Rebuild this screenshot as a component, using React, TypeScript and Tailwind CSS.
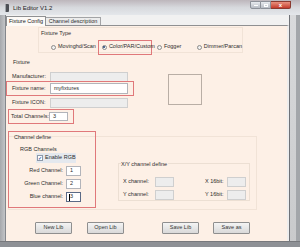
import React from "react";

function Radio({ checked }: { checked?: boolean }) {
  return (
    <span className="w-[5px] h-[5px] rounded-full border border-[#8c8c8c] bg-gradient-to-br from-[#e2e2e2] to-white flex items-center justify-center shrink-0">
      {checked && <span className="w-[2px] h-[2px] rounded-full bg-[#1e3f73]" />}
    </span>
  );
}

function Field({ w, grey, value, h = "h-[10px]" }: { w: string; grey?: boolean; value?: string; h?: string }) {
  return (
    <div
      className={`${w} ${h} border flex items-center pl-[3px] ${
        grey ? "bg-[#ededed] border-[#cfcfcf]" : "bg-white border-[#b2b4ba]"
      }`}
    >
      {value}
    </div>
  );
}

function Button({ label }: { label: string }) {
  return (
    <div className="w-[37px] h-[12px] border border-[#8f8f8f] rounded-[1px] bg-gradient-to-b from-[#f4f4f4] to-[#d9d9d9] flex items-center justify-center text-[#333]">
      {label}
    </div>
  );
}

export default function App() {
  return (
    <div className="w-[300px] h-[247px] overflow-hidden flex flex-col bg-[#9c9fa4] font-['Liberation_Sans',sans-serif] text-[5.5px] leading-none text-[#2d2d2d]">
      {/* title bar */}
      <div className="h-[15px] shrink-0 flex items-start bg-gradient-to-b from-[#bdb6bb] via-[#d7d9dd] to-[#e4e7eb]">
        <div className="mt-[4px] ml-[5px] w-[4px] h-[8px] rounded-[1px] bg-[#4d4f55] border-l border-[#a0a3a8]" />
        <span className="mt-[5px] ml-[4px] text-[6px] text-[#222]">Lib Editor V1.2</span>
        <div className="ml-auto mr-[9px] mt-[1px] flex">
          <div className="w-[11px] h-[8px] border border-[#8d9199] bg-gradient-to-b from-[#e8ebef] to-[#b7bcc4] rounded-bl-[2px] flex items-end justify-center pb-[2px]">
            <span className="w-[4px] h-[1px] bg-white" />
          </div>
          <div className="w-[10px] h-[8px] border-y border-r border-[#8d9199] bg-gradient-to-b from-[#e8ebef] to-[#b7bcc4] flex items-center justify-center">
            <span className="w-[4px] h-[3px] border border-white" />
          </div>
          <div className="w-[20px] h-[8px] border-y border-r border-[#8a3a30] bg-gradient-to-b from-[#e8917f] to-[#c4392b] rounded-br-[2px] flex items-center justify-center text-white text-[6px] font-bold">
            x
          </div>
        </div>
      </div>

      <div className="flex flex-1 min-h-0">
        {/* left frame */}
        <div className="w-[6px] shrink-0 bg-gradient-to-r from-[#a6a8ac] to-[#c2c4c7] border-r border-[#84878c]" />

        <div className="w-[283px] flex flex-col min-h-0">
          {/* tabs */}
          <div className="h-[10px] shrink-0 flex items-end bg-[#f1f1f1]">
            <div className="w-[40px] h-[10px] -mb-px relative z-10 bg-[#fdfaf7] border-x border-t border-[#8f9092] flex items-center justify-center text-[#222]">
              Fixture Config
            </div>
            <div className="w-[55px] h-[8px] bg-[#ececec] border-r border-t border-[#a3a4a6] flex items-center justify-center">
              Channel description
            </div>
          </div>

          {/* content */}
          <div className="flex-1 min-h-0 bg-[#fdf0e6] border-t border-r-2 border-[#8f9092] border-r-[#eeeeee] flex flex-col">
            {/* fixture type */}
            <div className="ml-[32px] mt-[1px] w-[205px] h-[26px] border border-[#f1e3d7] flex flex-col">
              <span className="ml-[2px] mt-[3px]">Fixture Type</span>
              <div className="mt-[3px] flex items-center h-[15px]">
                <div className="ml-[12px] w-[47px] flex items-center gap-[2px]">
                  <Radio />
                  <span>Movinghd/Scan</span>
                </div>
                <div className="w-[54px] h-[15px] border border-[#e0787a] flex items-center gap-[2px] pl-[3px]">
                  <Radio checked />
                  <span>Color/PAR/Custom</span>
                </div>
                <div className="ml-[5px] w-[40px] flex items-center gap-[2px]">
                  <Radio />
                  <span>Fogger</span>
                </div>
                <div className="flex items-center gap-[2px]">
                  <Radio />
                  <span>Dimmer/Parcan</span>
                </div>
              </div>
            </div>

            {/* fixture */}
            <div className="flex">
              <div className="w-[128px] flex flex-col">
                <span className="ml-[7px] mt-[7px] h-[6px]">Fixture</span>
                <div className="mt-[6px] ml-[6px] flex items-center">
                  <span className="w-[38px]">Manufacturer:</span>
                  <Field w="w-[78px]" grey />
                </div>
                <div className="-mt-px h-[15px] border border-[#e0787a] flex items-center pl-[5px]">
                  <span className="w-[38px]">Fixture name:</span>
                  <Field w="w-[78px]" h="h-[11px]" value="myfixtures" />
                </div>
                <div className="mt-[2px] ml-[6px] flex items-center">
                  <span className="w-[38px]">Fixture ICON:</span>
                  <Field w="w-[78px]" grey />
                </div>
                <div className="mt-px ml-[2px] w-[66px] h-[15px] border border-[#e0787a] flex items-center pl-[2px]">
                  <span className="w-[38px]">Total Channels:</span>
                  <Field w="w-[19px]" h="h-[9px]" value="3" />
                </div>
              </div>
              <div className="ml-[34px] mt-[21px] w-[34px] h-[31px] border border-[#b9aea5]" />
            </div>

            {/* channel define */}
            <div className="ml-[2px] mt-[12px] w-[249px] h-[74px] border border-[#f1e3d7] flex items-start">
              <div className="-ml-px -mt-[6px] w-[88px] h-[77px] border border-[#e0787a] flex flex-col">
                <span className="ml-[5px] mt-[3px]">Channel define</span>
                <span className="ml-[11px] mt-[6px]">RGB Channels</span>
                <div className="ml-[27px] mt-[1px] w-[40px] h-[10px] bg-[#e4e8ee] flex items-center gap-[2px] pl-[1px]">
                  <span className="w-[6px] h-[6px] border border-[#8d99aa] bg-white flex items-center justify-center text-[#1d4fa3] text-[5px] font-bold">
                    ✓
                  </span>
                  <span>Enable RGB</span>
                </div>
                <div className="mt-[3px] flex items-center">
                  <span className="w-[54px] text-right">Red Channel:</span>
                  <div className="ml-[3px]">
                    <Field w="w-[15px]" value="1" />
                  </div>
                </div>
                <div className="mt-[3px] flex items-center">
                  <span className="w-[54px] text-right">Green Channel:</span>
                  <div className="ml-[3px]">
                    <Field w="w-[15px]" value="2" />
                  </div>
                </div>
                <div className="mt-[3px] flex items-center">
                  <span className="w-[54px] text-right">Blue channel:</span>
                  <div className="ml-[3px] w-[15px] h-[10px] bg-white border border-[#5a6a86] flex items-center pl-[2px]">
                    <span className="w-px h-[7px] bg-black" />
                    <span>3</span>
                  </div>
                </div>
              </div>

              <div className="ml-[22px] mt-[26px] w-[132px] h-[38px] border border-[#ecdfd3] flex flex-col">
                <span className="ml-[2px] -mt-[2px] bg-[#fdf0e6] w-fit pr-px">X/Y channel define</span>
                <div className="mt-[9px] flex items-center">
                  <span className="ml-[4px] w-[32px]">X channel:</span>
                  <Field w="w-[19px]" grey />
                  <span className="ml-[31px] w-[22px]">X 16bit:</span>
                  <Field w="w-[19px]" grey />
                </div>
                <div className="mt-[3px] flex items-center">
                  <span className="ml-[4px] w-[32px]">Y channel:</span>
                  <Field w="w-[19px]" grey />
                  <span className="ml-[31px] w-[22px]">Y 16bit:</span>
                  <Field w="w-[19px]" grey />
                </div>
              </div>
            </div>

            {/* buttons */}
            <div className="ml-[29px] mt-[12px] flex">
              <Button label="New Lib" />
              <div className="ml-[15px]">
                <Button label="Open Lib" />
              </div>
              <div className="ml-[38px]">
                <Button label="Save Lib" />
              </div>
              <div className="ml-[14px]">
                <Button label="Save as" />
              </div>
            </div>
          </div>
        </div>

        {/* right frame */}
        <div className="flex-1 flex border-l border-[#6f7277]">
          <div className="w-[6px] bg-gradient-to-b from-[#d9dadc] to-[#c9cacc]" />
          <div className="flex-1 bg-[#a3a6aa]" />
        </div>
      </div>

      {/* bottom frame */}
      <div className="h-[6px] shrink-0 bg-[#8e9196] border-t border-[#77797d]" />
    </div>
  );
}
